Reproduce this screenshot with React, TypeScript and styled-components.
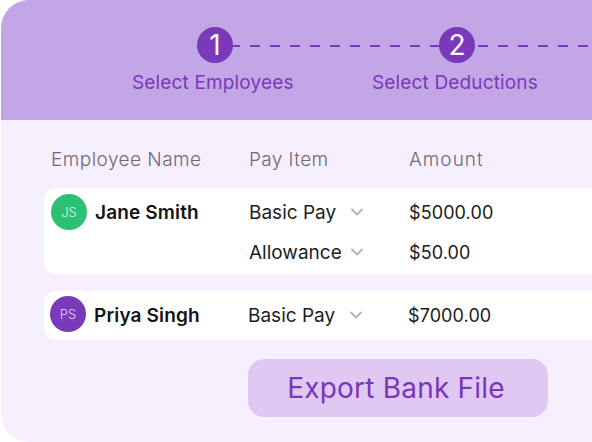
import React from "react";
import styled, { createGlobalStyle } from "styled-components";
import { ChevronDown } from "lucide-react";

const Global = createGlobalStyle`
  html, body { margin: 0; padding: 0; background: #fff; }
  body { width: 592px; height: 442px; overflow: hidden; font-family: Inter, "Open Sans", sans-serif; }
`;

const Card = styled.div`
  margin-left: 1px;
  width: 591px;
  height: 442px;
  background: #f6f0fe;
  border-radius: 28px 0 0 28px;
  overflow: hidden;
  display: flex;
  flex-direction: column;
`;

const Header = styled.header`
  height: 120px;
  background: #c2a6e5;
  padding-top: 27px;
  box-sizing: border-box;
  flex: none;
`;

const Track = styled.div`
  display: flex;
  align-items: center;
  padding-left: 196px;
`;

const Circle = styled.div`
  width: 36px;
  height: 36px;
  flex: none;
  border-radius: 50%;
  background: #7a38bb;
  color: #fff;
  font-size: 28px;
  display: flex;
  align-items: center;
  justify-content: center;
`;

const Dash = styled.div<{ $w?: number; $phase: number }>`
  height: 2px;
  margin-top: 2px;
  width: ${(p) => (p.$w ? `${p.$w}px` : "auto")};
  flex: ${(p) => (p.$w ? "none" : "1")};
  background: linear-gradient(90deg, #7a38bb 50%, transparent 50%) ${(p) => p.$phase}px 0 / 20px 100%;
`;

const Labels = styled.div`
  display: flex;
  padding: 9px 0 0 131px;
`;

const StepLabel = styled.div<{ $w: number }>`
  width: ${(p) => p.$w}px;
  font-size: 19px;
  letter-spacing: 0.15px;
  line-height: 22px;
  color: #7a38bb;
  white-space: nowrap;
`;

const Body = styled.main`
  flex: 1;
  display: flex;
  flex-direction: column;
  padding-left: 43px;
`;

const Columns = styled.div`
  display: grid;
  grid-template-columns: 198px 160px 1fr;
  padding: 29px 0 0 7px;
  font-size: 19px;
  font-weight: 300;
  line-height: 22px;
  color: #6f6a78;
`;

const ColumnTitle = styled.div<{ $spacing: number }>`
  letter-spacing: ${(p) => p.$spacing}px;
`;

const Row = styled.section<{ $top: number; $shift?: number; $pt: number; $pb: number }>`
  margin-top: ${(p) => p.$top}px;
  background: #fff;
  border-radius: 12px 0 0 12px;
  display: grid;
  grid-template-columns: 198px 160px 1fr;
  padding: ${(p) => p.$pt}px 0 ${(p) => p.$pb}px ${(p) => 7 - (p.$shift ?? 0)}px;
`;

const Person = styled.div`
  display: flex;
  align-items: center;
  gap: 8px;
  height: 36px;
`;

const Avatar = styled.div<{ $bg: string; $fg: string }>`
  width: 36px;
  height: 36px;
  border-radius: 50%;
  background: ${(p) => p.$bg};
  color: ${(p) => p.$fg};
  font-size: 13px;
  font-weight: 300;
  display: flex;
  align-items: center;
  justify-content: center;
`;

const Name = styled.div<{ $drop?: number }>`
  font-size: 19px;
  font-weight: 600;
  letter-spacing: 0.15px;
  color: #141414;
  white-space: nowrap;
  padding-top: ${(p) => p.$drop ?? 0}px;
`;

const Lines = styled.div<{ $drop?: number }>`
  display: flex;
  flex-direction: column;
  gap: 4px;
  padding-top: ${(p) => p.$drop ?? 0}px;
`;

const PayLine = styled.div`
  display: flex;
  align-items: center;
  height: 36px;
  font-size: 19px;
  font-weight: 400;
  color: #1c1c1c;
  white-space: nowrap;
`;

const AmountLine = styled(PayLine)`
  font-size: 18px;
  letter-spacing: 0.1px;
`;

const PayName = styled.span`
  width: 98px;
`;

const Chevron = styled(ChevronDown)`
  color: #b4b4b4;
`;

const Export = styled.button`
  margin: 19px 0 0 204px;
  width: 300px;
  height: 58px;
  border: 0;
  border-radius: 16px;
  background: #dfc9f3;
  color: #7a35bb;
  font-family: inherit;
  font-size: 28px;
  letter-spacing: 0.2px;
  padding: 0 4px 0 0;
`;

const Pay = ({ name }: { name: string }) => (
  <PayLine>
    <PayName>{name}</PayName>
    <Chevron size={20} strokeWidth={2.2} />
  </PayLine>
);

export default function App() {
  return (
    <>
      <Global />
      <Card>
        <Header>
          <Track>
            <Circle>1</Circle>
            <Dash $w={206} $phase={-3} />
            <Circle>2</Circle>
            <Dash $phase={3} />
          </Track>
          <Labels>
            <StepLabel $w={240}>Select Employees</StepLabel>
            <StepLabel $w={170}>Select Deductions</StepLabel>
          </Labels>
        </Header>
        <Body>
          <Columns>
            <ColumnTitle $spacing={0.45}>Employee Name</ColumnTitle>
            <ColumnTitle $spacing={0.4}>Pay Item</ColumnTitle>
            <ColumnTitle $spacing={1}>Amount</ColumnTitle>
          </Columns>
          <Row $top={17} $pt={6} $pb={4}>
            <Person>
              <Avatar $bg="#2cc172" $fg="#d8f5e5">JS</Avatar>
              <Name>Jane Smith</Name>
            </Person>
            <Lines>
              <Pay name="Basic Pay" />
              <Pay name="Allowance" />
            </Lines>
            <Lines>
              <AmountLine>$5000.00</AmountLine>
              <AmountLine>$50.00</AmountLine>
            </Lines>
          </Row>
          <Row $top={17} $shift={1} $pt={5} $pb={7}>
            <Person>
              <Avatar $bg="#7a38bb" $fg="#e6d6f5">PS</Avatar>
              <Name $drop={2}>Priya Singh</Name>
            </Person>
            <Lines $drop={1}>
              <Pay name="Basic Pay" />
            </Lines>
            <Lines $drop={1}>
              <AmountLine>$7000.00</AmountLine>
            </Lines>
          </Row>
          <Export>Export Bank File</Export>
        </Body>
      </Card>
    </>
  );
}
